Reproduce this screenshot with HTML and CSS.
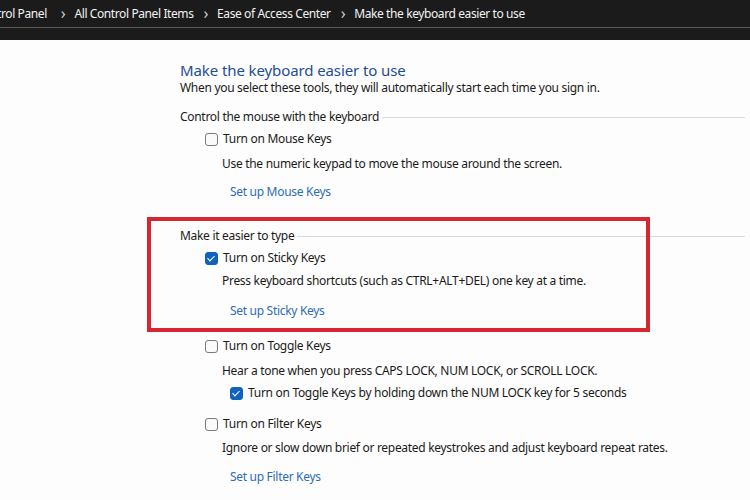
FILE: index.html
```html
<!DOCTYPE html>
<html lang="en">

<head>
    <meta charset="UTF-8">
    <meta name="viewport" content="width=device-width, initial-scale=1.0">
    <title>Make the keyboard easier to use</title>
    <link rel="stylesheet" href="styles.css">
</head>

<body>
    <div class="topbar">
        <div class="breadcrumb">
            <span class="crumb first">Control Panel</span>
            <span class="sep">&#8250;</span>
            <span class="crumb">All Control Panel Items</span>
            <span class="sep">&#8250;</span>
            <span class="crumb">Ease of Access Center</span>
            <span class="sep">&#8250;</span>
            <span class="crumb">Make the keyboard easier to use</span>
        </div>
    </div>

    <div class="content">
        <h1>Make the keyboard easier to use</h1>
        <p class="subtitle">When you select these tools, they will automatically start each time you sign in.</p>

        <div class="group">
            <div class="group-title"><span>Control the mouse with the keyboard</span></div>
            <label class="check"><span class="box"></span>Turn on Mouse Keys</label>
            <p class="desc">Use the numeric keypad to move the mouse around the screen.</p>
            <a class="link" href="#">Set up Mouse Keys</a>
        </div>

        <div class="group highlighted">
            <div class="marker"></div>
            <div class="group-title"><span>Make it easier to type</span></div>
            <label class="check"><span class="box checked"></span>Turn on Sticky Keys</label>
            <p class="desc sticky-desc">Press keyboard shortcuts (such as CTRL+ALT+DEL) one key at a time.</p>
            <a class="link sticky-link" href="#">Set up Sticky Keys</a>

            <label class="check toggle"><span class="box"></span>Turn on Toggle Keys</label>
            <p class="desc">Hear a tone when you press CAPS LOCK, NUM LOCK, or SCROLL LOCK.</p>
            <label class="check nested"><span class="box checked"></span>Turn on Toggle Keys by holding down the NUM LOCK key for 5 seconds</label>

            <label class="check filter"><span class="box"></span>Turn on Filter Keys</label>
            <p class="desc filter-desc">Ignore or slow down brief or repeated keystrokes and adjust keyboard repeat rates.</p>
            <a class="link filter-link" href="#">Set up Filter Keys</a>
        </div>
    </div>
</body>

</html>
```

FILE: styles.css
```css
body {
    margin: 0;
    background-color: #fdfdfd;
    font-family: "Noto Sans", "Open Sans", sans-serif;
    font-size: 12px;
    letter-spacing: -0.3px;
    color: #1a1a1a;
    overflow: hidden;
}

.topbar {
    height: 40px;
    background-color: #1b1b1b;
}

.breadcrumb {
    height: 27px;
    border-bottom: 1px solid #5a5a5a;
    display: flex;
    align-items: center;
    white-space: nowrap;
    overflow: hidden;
    color: #f2f2f2;
    font-size: 12px;
    letter-spacing: -0.4px;
}

.crumb.first {
    margin-left: -24px;
}

.sep {
    font-size: 16px;
    margin: 0 9px 2px 10px;
    color: #d0d0d0;
}

.crumb.first + .sep {
    margin-left: 14px;
}

.content {
    padding: 20px 0 0 180px;
}

h1 {
    margin: 0;
    font-size: 15px;
    font-weight: normal;
    line-height: 20px;
    letter-spacing: -0.1px;
    color: #1f4e96;
}

.subtitle {
    margin: 0;
    line-height: 16px;
}

.group {
    position: relative;
}

.group-title {
    display: flex;
    align-items: center;
    line-height: 16px;
    margin-top: 13px;
}

.group-title::after {
    content: "";
    flex: 1;
    height: 1px;
    background-color: #d9d9d9;
    margin-left: 3px;
    margin-right: 5px;
}

.highlighted .group-title {
    margin-top: 28px;
}

.marker {
    position: absolute;
    left: -33px;
    top: -11px;
    width: 495px;
    height: 107px;
    border: 4px solid #d52632;
}

.check {
    display: flex;
    align-items: center;
    margin: 6px 0 0 25px;
    line-height: 16px;
}

.box {
    width: 11px;
    height: 11px;
    border: 1px solid #7a7a7a;
    border-radius: 3px;
    margin-right: 5px;
    background-color: #fafafa;
    flex-shrink: 0;
}

.box.checked {
    border-color: #1162bf;
    background-color: #1162bf;
    position: relative;
}

.box.checked::after {
    content: "";
    position: absolute;
    left: 3px;
    top: 1px;
    width: 3px;
    height: 6px;
    border: solid #ffffff;
    border-width: 0 1.5px 1.5px 0;
    transform: rotate(45deg);
}

.desc {
    margin: 9px 0 0 42px;
    line-height: 16px;
}

.link {
    display: block;
    margin: 12px 0 0 50px;
    line-height: 16px;
    color: #2c6cb5;
    text-decoration: none;
}

.desc.sticky-desc {
    margin-top: 7px;
}

.link.sticky-link {
    margin-top: 14px;
}

.check.toggle {
    margin-top: 19px;
}

.check.nested {
    margin-left: 50px;
}

.check.filter {
    margin-top: 15px;
}

.desc.filter-desc {
    margin-top: 8px;
}

.link.filter-link {
    margin-top: 13px;
}
```
